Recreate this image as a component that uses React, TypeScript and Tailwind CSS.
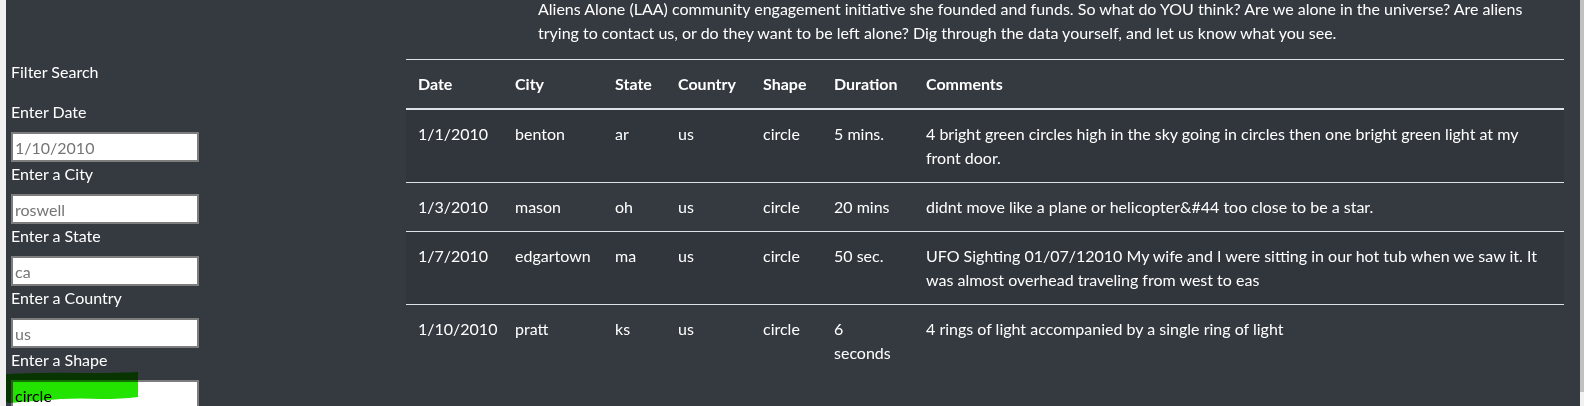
const rows = [
  {
    date: "1/1/2010",
    city: "benton",
    state: "ar",
    country: "us",
    shape: "circle",
    duration: "5 mins.",
    comments:
      "4 bright green circles high in the sky going in circles then one bright green light at my front door.",
  },
  {
    date: "1/3/2010",
    city: "mason",
    state: "oh",
    country: "us",
    shape: "circle",
    duration: "20 mins",
    comments: "didnt move like a plane or helicopter&#44 too close to be a star.",
  },
  {
    date: "1/7/2010",
    city: "edgartown",
    state: "ma",
    country: "us",
    shape: "circle",
    duration: "50 sec.",
    comments:
      "UFO Sighting 01/07/12010 My wife and I were sitting in our hot tub when we saw it. It was almost overhead traveling from west to eas",
  },
  {
    date: "1/10/2010",
    city: "pratt",
    state: "ks",
    country: "us",
    shape: "circle",
    duration: "6 seconds",
    comments: "4 rings of light accompanied by a single ring of light",
  },
];

const fields = [
  { label: "Enter Date", placeholder: "1/10/2010" },
  { label: "Enter a City", placeholder: "roswell" },
  { label: "Enter a State", placeholder: "ca" },
  { label: "Enter a Country", placeholder: "us" },
];

export default function App() {
  return (
    <div className="flex h-[406px] overflow-hidden bg-[#353a41] text-white font-['Lato',sans-serif] text-base leading-6">
      <div className="w-[6px] shrink-0 bg-[#f1f1f1]" />

      {/* sidebar filters */}
      <aside className="w-[400px] shrink-0 pl-[5px] pt-[60px]">
        <p className="mb-4">Filter Search</p>
        {fields.map((f) => (
          <div key={f.label}>
            <label className="block mb-2">{f.label}</label>
            <input
              placeholder={f.placeholder}
              className="block w-[188px] h-[30px] px-[2px] bg-white text-black border-2 border-[#7d7d7d] placeholder:text-[#757575] outline-none"
            />
          </div>
        ))}
        <div>
          <label className="block mb-2">Enter a Shape</label>
          <div className="relative">
            <input
              defaultValue="circle"
              className="block w-[188px] h-[30px] px-[2px] bg-white text-black border-2 border-[#7d7d7d] outline-none"
            />
            {/* green marker scribble */}
            <svg
              className="absolute left-[-5px] top-[-8px] mix-blend-multiply pointer-events-none"
              width="133"
              height="32"
              viewBox="0 0 133 32"
            >
              <path
                d="M0 2 Q40 0 80 1 Q110 1 132 0 L132 25 Q115 27 95 27 Q75 26 55 27 Q30 29 14 30 L4 31 L0 30 Z"
                fill="#22e400"
              />
            </svg>
          </div>
        </div>
      </aside>

      {/* main content */}
      <main className="flex-1 pr-4">
        <p className="-mt-[3px] mb-[14px] pl-[132px]">
          Aliens Alone (LAA) community engagement initiative she founded and funds. So what do YOU
          think? Are we alone in the universe? Are aliens
          <br />
          trying to contact us, or do they want to be left alone? Dig through the data yourself, and
          let us know what you see.
        </p>

        <table className="w-full table-fixed border-collapse text-left">
          <colgroup>
            <col className="w-[97px]" />
            <col className="w-[100px]" />
            <col className="w-[63px]" />
            <col className="w-[85px]" />
            <col className="w-[71px]" />
            <col className="w-[92px]" />
            <col />
          </colgroup>
          <thead>
            <tr>
              {["Date", "City", "State", "Country", "Shape", "Duration", "Comments"].map((h) => (
                <th
                  key={h}
                  className="p-3 font-bold align-bottom border-t border-b-2 border-[#dee2e6]"
                >
                  {h}
                </th>
              ))}
            </tr>
          </thead>
          <tbody>
            {rows.map((r, i) => (
              <tr key={r.date} className={i % 2 === 0 ? "bg-[#31363c]" : ""}>
                <td className="p-3 align-top border-t border-[#dee2e6]">{r.date}</td>
                <td className="p-3 align-top border-t border-[#dee2e6]">{r.city}</td>
                <td className="p-3 align-top border-t border-[#dee2e6]">{r.state}</td>
                <td className="p-3 align-top border-t border-[#dee2e6]">{r.country}</td>
                <td className="p-3 align-top border-t border-[#dee2e6]">{r.shape}</td>
                <td className="p-3 align-top border-t border-[#dee2e6]">{r.duration}</td>
                <td className="p-3 align-top border-t border-[#dee2e6]">{r.comments}</td>
              </tr>
            ))}
          </tbody>
        </table>
      </main>

      <div className="w-[4px] shrink-0 flex flex-col">
        <div className="h-[392px] bg-[#c1c1c1]" />
        <div className="flex-1 bg-[#f1f1f1]" />
      </div>
    </div>
  );
}
